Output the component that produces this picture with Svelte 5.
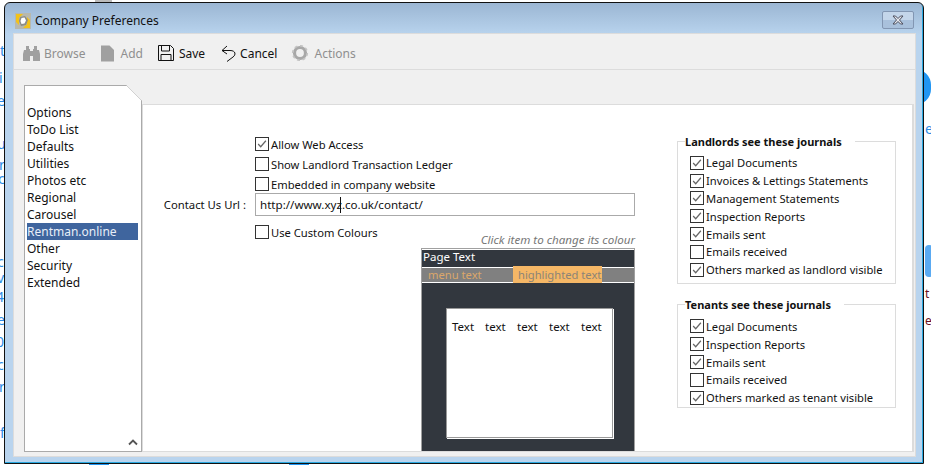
<script>
	const menu = ["Options", "ToDo List", "Defaults", "Utilities", "Photos etc", "Regional", "Carousel", "Rentman.online", "Other", "Security", "Extended"]
	const selected = "Rentman.online"

	const landlords = [
		["Legal Documents", true],
		["Invoices & Lettings Statements", true],
		["Management Statements", true],
		["Inspection Reports", true],
		["Emails sent", true],
		["Emails received", false],
		["Others marked as landlord visible", true],
	]
	const tenants = [
		["Legal Documents", true],
		["Inspection Reports", true],
		["Emails sent", true],
		["Emails received", false],
		["Others marked as tenant visible", true],
	]

	// bits of the page behind the dialog that peek out at the edges
	const behind = [
		["t", 0, 41], ["i", -1, 68], ["e", -3, 91], ["u", -3, 134], ["r", -1, 155], ["c", -2, 169],
		["c", -3, 252], ["v", -3, 268], ["4", -4, 287], ["e", -3, 310], ["0", -4, 332], ["c", -3, 355],
		["r", -1, 377], ["f", 0, 423], ["e", 925, 119],
	]
</script>

{#snippet check(on)}
	<span class="box">
		{#if on}
			<svg viewBox="0 0 14 14" width="12" height="12"><path d="M2.5 7l3 3.2 6-7" fill="none" stroke="#666" stroke-width="1.4" /></svg>
		{/if}
	</span>
{/snippet}

{#snippet journal(title, items)}
	<fieldset class="group">
		<legend>{title}</legend>
		{#each items as [label, on]}
			<div class="item">{@render check(on)}<span>{label}</span></div>
		{/each}
	</fieldset>
{/snippet}

<div class="desktop">
	{#each behind as [ch, x, y]}
		<span class="scrap" style="left:{x}px;top:{y}px">{ch}</span>
	{/each}
	<span class="scrap dark" style="left:925px;top:285px">t l</span>
	<span class="scrap dark" style="left:925px;top:312px">er</span>
	<span class="blob one"></span>
	<span class="blob two"></span>
	<span class="blob three"></span>
	<span class="blob four"></span>
	<span class="blob five"></span>

	<div class="window">
		<div class="titlebar">
			<svg class="logo" viewBox="0 0 16 16" width="16" height="16">
				<rect width="16" height="16" fill="#b8b8ac" />
				<path d="M1 1h7L4 5v7L1 9zM15 15H8l4-4V4l3 3z" fill="#f2c21a" />
				<path d="M5 4l5-1 3 4-2 5-5 1-2-5z" fill="#8d8d88" />
				<path d="M6.500 5l3-.5 1.500 3-1.500 3-3 .5-1-3z" fill="#fff" />
			</svg>
			<span class="title">Company Preferences</span>
			<button class="close" aria-label="Close">
				<svg viewBox="0 0 14 10" width="14" height="10"><path d="M2 1h2.500L7 3.500 9.500 1H12L8.500 5 12 9H9.500L7 6.500 4.500 9H2L5.500 5z" fill="#e6e8ee" stroke="#4a4d5c" stroke-width="1" /></svg>
			</button>
		</div>

		<div class="client">
			<div class="toolbar">
				<span class="tool off browse">
					<svg viewBox="0 0 17 15" width="17" height="15"><path d="M3 0h3v3h1v12H0V8l1-4h2zM14 0h-3v3h-1v12h7V8l-1-4h-2zM7 5h3v5H7z" fill="#a0a0a0" /></svg>
					Browse
				</span>
				<span class="tool off add">
					<svg viewBox="0 0 15 17" width="15" height="17"><path d="M1 .5h8.500L14 5v11.500H1z" fill="#a0a0a0" /></svg>
					Add
				</span>
				<span class="tool save">
					<svg viewBox="0 0 16 16" width="16" height="16"><path d="M.5.500h12l3 3v12H.5zM3.500 1v5h8V1M3 15.500V9.500h10v6" fill="none" stroke="#111" /></svg>
					Save
				</span>
				<span class="tool cancel">
					<svg viewBox="0 0 16 17" width="16" height="17"><path d="M7 1L2 5.500l5 3.500M2 5.500h8c6 0 6 4.500 3 6.500l-6 4.500" fill="none" stroke="#111" /></svg>
					Cancel
				</span>
				<span class="tool off actions">
					<svg viewBox="0 0 18 16" width="18" height="16"><circle cx="9" cy="8" r="5.500" fill="none" stroke="#a8a8a8" stroke-width="3.200" /><circle cx="9" cy="8" r="7.300" fill="none" stroke="#c4c4c4" stroke-width="1.600" stroke-dasharray="3 2.700" /></svg>
					Actions
				</span>
			</div>

			<div class="panels">
				<nav class="sidebar">
					<svg class="notch" viewBox="0 0 16 16" width="16" height="16"><path d="M0 0L16 16" stroke="#aaa" fill="none" /></svg>
					<ul>
						{#each menu as name}
							<li class:selected={name === selected}>{name}</li>
						{/each}
					</ul>
					<svg class="chevron" viewBox="0 0 10 7" width="10" height="7"><path d="M1 5.500l4-4 4 4" fill="none" stroke="#555" stroke-width="1.800" /></svg>
				</nav>

				<main class="page">
					<div class="form">
						<div class="check first">{@render check(true)}<span>Allow Web Access</span></div>
						<div class="check second">{@render check(false)}<span>Show Landlord Transaction Ledger</span></div>
						<div class="check third">{@render check(false)}<span>Embedded in company website</span></div>
						<label class="url-label" for="url">Contact Us Url :</label>
						<div class="url-wrap">
							<input id="url" class="url" value="http://www.xyz.co.uk/contact/" />
							<span class="caret"></span>
						</div>
						<div class="check custom">{@render check(false)}<span>Use Custom Colours</span></div>
						<div class="hint">Click item to change its colour</div>
						<div class="preview">
							<div class="page-text">Page Text</div>
							<div class="menu-row">
								<span class="menu-text">menu text</span>
								<span class="highlight">highlighted text</span>
							</div>
							<div class="stage">
								<div class="card">
									<span>Text</span><span>text</span><span>text</span><span>text</span><span>text</span>
								</div>
							</div>
						</div>
					</div>

					<div class="journals">
						{@render journal("Landlords see these journals", landlords)}
						{@render journal("Tenants see these journals", tenants)}
					</div>
				</main>
			</div>
		</div>
	</div>
</div>

<style>
	:global(body) {
		margin: 0;
		background: #fff;
	}

	.desktop {
		position: relative;
		width: 931px;
		height: 465px;
		overflow: hidden;
		font-family: "Noto Sans", "Open Sans", sans-serif;
		font-size: 11.2px;
		color: #111;
	}

	.scrap {
		position: absolute;
		font-size: 14px;
		color: #2b8be6;
		white-space: nowrap;
	}

	.scrap.dark {
		color: #6a1020;
		font-size: 12px;
	}

	.blob {
		position: absolute;
		background: #2196f3;
	}

	.blob.one {
		left: 915px;
		top: 69px;
		width: 16px;
		height: 36px;
		border-radius: 0 18px 18px 0;
	}

	.blob.two {
		left: 925px;
		top: 245px;
		width: 8px;
		height: 32px;
		border-radius: 4px;
		background: #5aaaf2;
	}

	.blob.three {
		left: 89px;
		top: 463px;
		width: 20px;
		height: 2px;
	}

	.blob.four {
		left: 289px;
		top: 463px;
		width: 20px;
		height: 2px;
	}

	.blob.five {
		left: 95px;
		top: 0;
		width: 17px;
		height: 2px;
		background: #bbb;
	}

	.window {
		position: absolute;
		left: 4px;
		top: 2px;
		width: 918px;
		height: 460px;
		display: flex;
		flex-direction: column;
		border: 1px solid #111;
		border-radius: 6px 6px 0 0;
		background: linear-gradient(#9bb6d3, #b9d4ee 32px);
		box-shadow: inset -1px -1px 0 #2aa8e0;
	}

	.titlebar {
		height: 30px;
		display: flex;
		align-items: center;
		padding: 0 9px 0 9px;
		flex-shrink: 0;
	}

	.logo {
		margin: 5px 4px 0 1px;
	}

	.title {
		font-size: 12px;
		color: #111;
		margin-top: 5px;
	}

	.close {
		margin-left: auto;
		margin-top: 3px;
		width: 32px;
		height: 18px;
		padding: 0;
		display: flex;
		align-items: center;
		justify-content: center;
		border: 1px solid #8296b2;
		border-radius: 2px;
		background: linear-gradient(#c4d6ea 50%, #a9c1dc 50%);
	}

	.client {
		flex: 1;
		display: flex;
		flex-direction: column;
		margin: 0 7px 6px 8px;
		border: 1px solid #dcdcdc;
		background: #f0f0f0;
		min-height: 0;
	}

	.toolbar {
		height: 32px;
		padding-top: 3px;
		display: flex;
		align-items: center;
		border-bottom: 1px solid #dcdcdc;
		flex-shrink: 0;
	}

	.tool {
		display: flex;
		align-items: center;
		gap: 4px;
		font-size: 12px;
		color: #111;
	}

	.tool.off {
		color: #8f8f8f;
	}

	.browse {
		margin-left: 9px;
	}

	.add {
		margin-left: 15px;
		gap: 5px;
	}

	.save {
		margin-left: 15px;
		gap: 5px;
	}

	.cancel {
		margin-left: 15px;
	}

	.actions {
		margin-left: 14px;
		gap: 5px;
	}

	.panels {
		flex: 1;
		display: flex;
		align-items: stretch;
		margin: 15px 1px 4px 10px;
		min-height: 0;
	}

	.sidebar {
		position: relative;
		width: 116px;
		flex-shrink: 0;
		display: flex;
		flex-direction: column;
		border: 1px solid #aaa;
		background: #fff;
		clip-path: polygon(0 0, 102px 0, 118px 16px, 118px 100%, 0 100%);
	}

	.notch {
		position: absolute;
		right: -1px;
		top: -1px;
	}

	.sidebar ul {
		list-style: none;
		margin: 18px 0 0 2px;
		padding: 0;
		width: 111px;
	}

	.sidebar li {
		height: 17px;
		line-height: 17px;
		font-size: 12px;
		white-space: nowrap;
	}

	.sidebar li.selected {
		background: #3f659e;
		color: #e8eef8;
	}

	.chevron {
		margin: auto 3px 5px auto;
	}

	.page {
		flex: 1;
		display: flex;
		margin-top: 19px;
		border: 1px solid #dcdcdc;
		border-right-width: 2px;
		background: #fff;
		overflow: hidden;
		min-width: 0;
	}

	.form {
		display: grid;
		grid-template-columns: 104px 380px;
		column-gap: 8px;
		align-content: start;
		padding-top: 32px;
		flex-shrink: 0;
	}

	.check {
		grid-column: 2;
		display: flex;
		align-items: center;
		gap: 2px;
		height: 14px;
		white-space: nowrap;
	}

	.second {
		margin-top: 6px;
	}

	.third {
		margin-top: 6px;
	}

	.custom {
		margin-top: 9px;
	}

	.box {
		width: 12px;
		height: 12px;
		display: inline-flex;
		flex-shrink: 0;
		border: 1px solid #333;
		background: #fff;
	}

	.url-label {
		grid-column: 1;
		margin-top: 2px;
		padding-right: 1px;
		line-height: 23px;
		font-size: 11.3px;
		text-align: right;
		white-space: nowrap;
	}

	.url-wrap {
		grid-column: 2;
		position: relative;
		margin-top: 2px;
	}

	.url {
		display: block;
		box-sizing: border-box;
		width: 100%;
		height: 23px;
		padding: 0 4px;
		border: 1px solid #aaa;
		border-radius: 0;
		font: inherit;
		font-size: 11.6px;
		color: #111;
		outline: none;
	}

	.caret {
		position: absolute;
		left: 85px;
		top: 4px;
		width: 1px;
		height: 16px;
		background: #111;
	}

	.hint {
		grid-column: 2;
		margin-top: -7px;
		height: 16px;
		line-height: 15px;
		text-align: right;
		font-size: 11.6px;
		font-style: italic;
		color: #777;
	}

	.preview {
		grid-column: 2;
		margin: 0 0 0 166px;
		width: 212px;
		height: 212px;
		display: flex;
		flex-direction: column;
		padding: 1px 0;
		border: 1px solid #a0a0a0;
		background: #fff;
		font-size: 11.5px;
	}

	.page-text {
		height: 17px;
		line-height: 13px;
		padding-left: 1px;
		background: #32373e;
		color: #fff;
	}

	.menu-row {
		display: flex;
		height: 14px;
		margin: 1px 0;
		background: #808080;
		font-size: 11.2px;
	}

	.menu-text {
		width: 85px;
		padding-left: 6px;
		line-height: 13px;
		color: #dba76a;
	}

	.highlight {
		width: 84px;
		height: 17px;
		margin-top: -2px;
		padding-left: 5px;
		line-height: 17px;
		background: #f5b766;
		color: #8c8476;
		white-space: nowrap;
	}

	.stage {
		flex: 1;
		padding: 25px 0 0 24px;
		background: #32373e;
	}

	.card {
		width: 160px;
		height: 118px;
		display: grid;
		grid-template-columns: 33px repeat(4, 32px);
		align-content: start;
		padding: 10px 0 0 5px;
		border: 1px solid #999;
		box-shadow: 1px 1px 0 #fff;
		background: #fff;
		color: #111;
	}

	.journals {
		width: 219px;
		margin: 28px 0 0 42px;
		flex-shrink: 0;
	}

	.group {
		margin: 0 0 12px;
		padding: 4px 0 4px 12px;
		border: 1px solid #dcdcdc;
	}

	.group + .group {
		padding: 5px 0 0 12px;
	}

	.group legend {
		margin-left: -5px;
		padding: 0 13px 0 0;
		font-size: 11px;
		font-weight: 700;
		line-height: 17px;
		color: #111;
	}

	.item {
		display: flex;
		align-items: center;
		gap: 2px;
		height: 17.8px;
		white-space: nowrap;
	}
</style>
